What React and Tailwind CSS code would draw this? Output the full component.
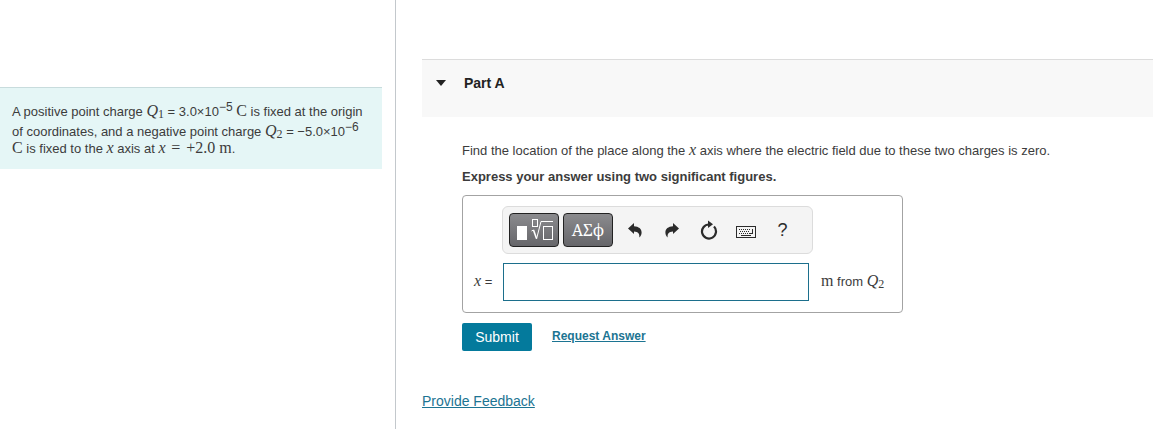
import React from 'react';

const Var = ({ name, sub }) => (
  <span className="font-['Liberation_Serif',serif] text-base leading-none">
    <i>{name}</i>
    {sub && <sub className="static align-[-2px] text-xs leading-none">{sub}</sub>}
  </span>
);

const Unit = ({ children }) => (
  <span className="font-['Liberation_Serif',serif] text-base leading-none">{children}</span>
);

const Power = ({ children }) => (
  <sup className="static align-[5px] text-xs leading-[14px]">{children}</sup>
);

const ToolButton = ({ label, children }) => (
  <button
    type="button"
    aria-label={label}
    className="flex h-8 w-[37px] items-center justify-center text-[#2b2b2b]"
  >
    {children}
  </button>
);

const PaletteButton = ({ label, children }) => (
  <button
    type="button"
    aria-label={label}
    className="flex h-[34px] w-[50px] items-center justify-center rounded border border-[#222] bg-linear-to-b from-[#8b8b8e] to-[#66666a] text-white"
  >
    {children}
  </button>
);

const TemplatesIcon = () => (
  <svg width="38" height="24" viewBox="0 0 38 24" fill="none" stroke="currentColor">
    <rect x="2" y="8" width="10" height="14" fill="currentColor" stroke="none" />
    <rect x="17.5" y="1.5" width="5" height="7" />
    <path d="M16.500 13l2-1" />
    <path d="M18.500 12l3 8.500" strokeWidth="1.600" />
    <path d="M21.500 21l4.500-17.500H38" />
    <rect x="28.5" y="8.5" width="9" height="13" />
  </svg>
);

const UndoIcon = () => (
  <svg width="14" height="15" viewBox="0 0 14 15" fill="currentColor">
    <path d="M0 5.500L6 0v3.200c4.800.3 7.600 2.600 7.600 6.300 0 2-.8 3.900-2.300 5.100.5-3.700-1-5.800-5.300-6V11z" />
  </svg>
);

const RedoIcon = () => (
  <svg width="14" height="15" viewBox="0 0 14 15" fill="currentColor">
    <path d="M14 5.500L8 0v3.200C3.200 3.500.4 5.800.4 9.500c0 2 .8 3.900 2.300 5.100-.5-3.700 1-5.800 5.300-6V11z" />
  </svg>
);

const ResetIcon = () => (
  <svg width="18" height="20" viewBox="0 0 18 20" fill="none">
    <path d="M14 6.600A7 7 0 1 1 9 4.500" stroke="currentColor" strokeWidth="2.200" />
    <path d="M8 .5L13 4.300 8 8z" fill="currentColor" />
  </svg>
);

const KeyboardIcon = () => (
  <svg width="20" height="16" viewBox="0 -4 20 16" fill="none" stroke="currentColor">
    <rect x=".5" y=".5" width="19" height="11" />
    <path d="M3 3.500h11M4 5.500h10M3 7.500h9" strokeDasharray="1 1" />
    <path d="M5 9.500h10M16.500 3v5M13 7.500h4" />
  </svg>
);

const Problem = () => (
  <aside className="w-[396px] shrink-0 border-r border-[#c3c8cc] pt-[87px]">
    <p className="mr-[13px] border-t border-[#c8dcdd] bg-[#e5f6f6] px-3 py-3 text-[13px] leading-4">
      A positive point charge <Var name="Q" sub="1" /> = 3.0×10<Power>−5</Power> <Unit>C</Unit> is
      fixed at the origin of coordinates, and a negative point charge <Var name="Q" sub="2" /> =
      −5.0×10<Power>−6</Power> <Unit>C</Unit> is fixed to the <Var name="x" /> axis at{' '}
      <Var name="x" />{' '}
      <Unit>
        <span className="mx-0.5">=</span> +2.0 m
      </Unit>
      .
    </p>
  </aside>
);

const Toolbar = () => (
  <div className="flex h-12 w-[311px] items-center rounded-md border border-[#dcdcdc] bg-[#f4f4f4] pl-1.5">
    <div className="flex gap-1">
      <PaletteButton label="Templates">
        <TemplatesIcon />
      </PaletteButton>
      <PaletteButton label="Symbols">
        <span className="font-['Noto_Serif','DejaVu_Serif',serif] text-base">ΑΣϕ</span>
      </PaletteButton>
    </div>
    <div className="ml-[3px] flex">
      <ToolButton label="Undo">
        <UndoIcon />
      </ToolButton>
      <ToolButton label="Redo">
        <RedoIcon />
      </ToolButton>
      <ToolButton label="Reset">
        <ResetIcon />
      </ToolButton>
      <ToolButton label="Keyboard shortcuts">
        <KeyboardIcon />
      </ToolButton>
      <ToolButton label="Help">
        <span className="text-lg">?</span>
      </ToolButton>
    </div>
  </div>
);

const AnswerBox = () => (
  <div className="w-[441px] rounded border border-[#a3a3a3] pt-2.5 pb-[11px]">
    <div className="pl-[39px]">
      <Toolbar />
    </div>
    <div className="mt-[9px] flex items-center">
      <label htmlFor="answer" className="w-10 pl-[11px] whitespace-nowrap">
        <Var name="x" /> =
      </label>
      <input
        id="answer"
        type="text"
        className="h-[38px] w-[306px] border border-[#1c6f8c] bg-white px-2 outline-none"
      />
      <span className="ml-3 whitespace-nowrap">
        <Unit>m</Unit> from <Var name="Q" sub="2" />
      </span>
    </div>
  </div>
);

export default function App() {
  return (
    <div className="flex min-h-screen bg-white font-['Liberation_Sans',Arial,sans-serif] text-[13px] text-[#3c3c3c]">
      <Problem />
      <main className="min-w-0 flex-1 pt-[59px] pl-[26px]">
        <h2 className="border-t border-[#dcdcdc] bg-[#f8f8f8] text-sm font-bold text-[#222]">
          <button type="button" className="flex h-[57px] w-full items-start pt-[13px] pl-3.5 leading-5">
            <svg width="10" height="6" viewBox="0 0 10 6" className="mt-[7px] mr-[18px]" fill="currentColor">
              <path d="M0 0h10L5 6z" />
            </svg>
            Part A
          </button>
        </h2>
        <section className="mt-6 ml-10">
          <p className="leading-5">
            Find the location of the place along the <Var name="x" /> axis where the electric field due
            to these two charges is zero.
          </p>
          <p className="mt-1.5 mb-2 leading-5 font-bold">
            Express your answer using two significant figures.
          </p>
          <AnswerBox />
          <div className="mt-2.5 flex items-center gap-5">
            <button type="submit" className="h-7 w-[70px] rounded-xs bg-[#047a9c] text-sm text-white">
              Submit
            </button>
            <a href="#answer" className="pb-0.5 text-xs font-bold text-[#1c7492] underline">
              Request Answer
            </a>
          </div>
        </section>
        <a href="#feedback" className="mt-10 inline-block text-sm leading-5 text-[#1c7492] underline">
          Provide Feedback
        </a>
      </main>
    </div>
  );
}
